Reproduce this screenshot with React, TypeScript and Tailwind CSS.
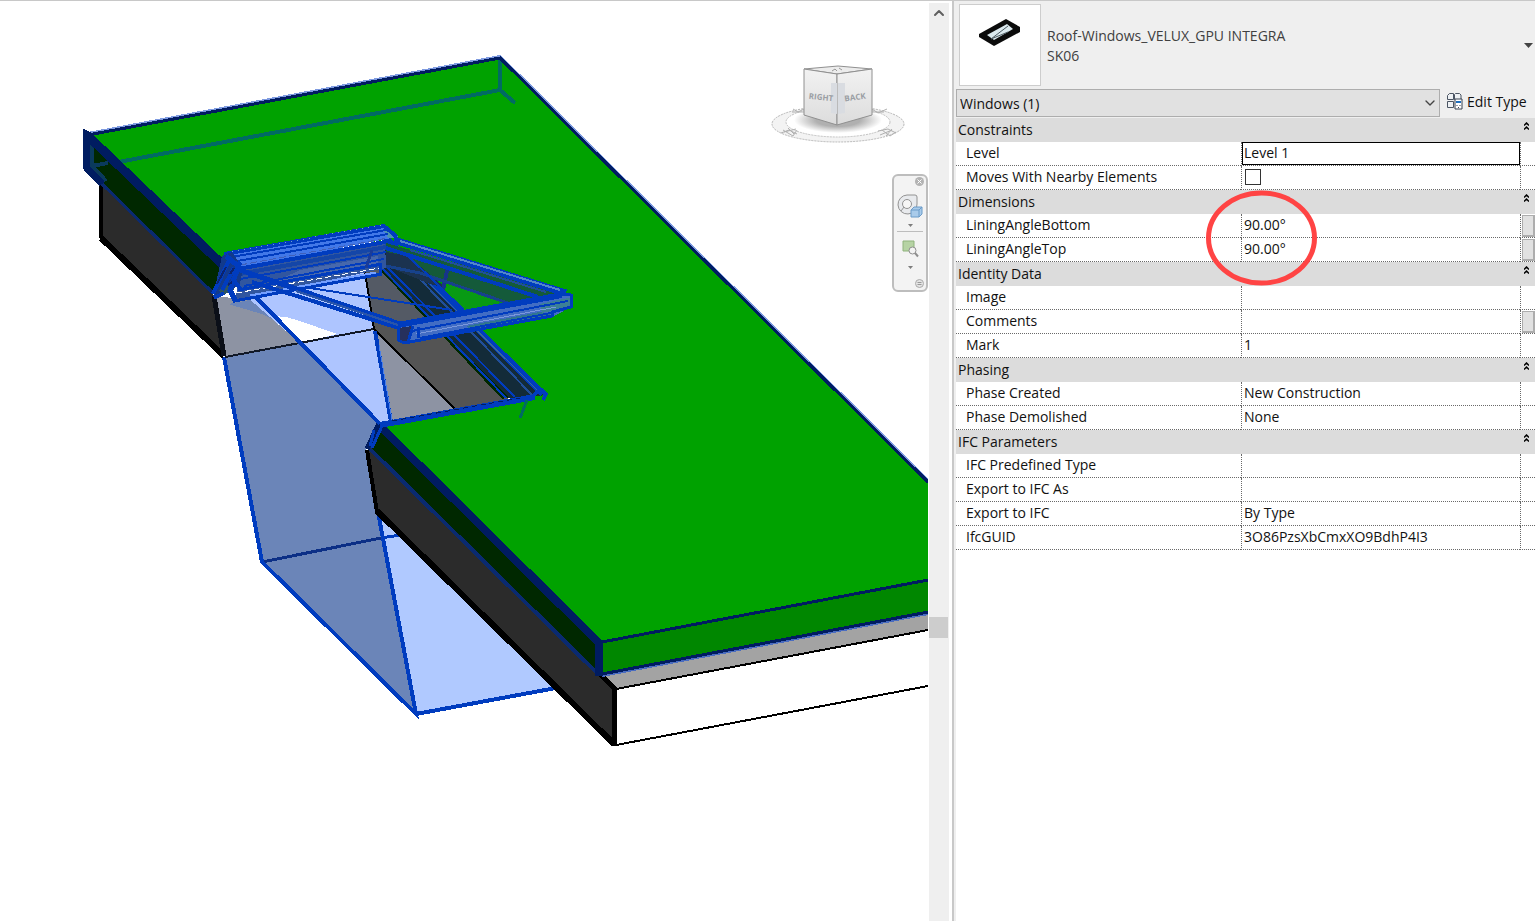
import { useState } from 'react';
import { ChevronDown, ChevronUp } from 'lucide-react';

interface Parameter {
  name: string;
  value?: string;
  kind?: 'input' | 'checkbox';
  marked?: boolean;
  hasPicker?: boolean;
}

interface ParameterGroup {
  title: string;
  parameters: Parameter[];
}

const GROUPS: ParameterGroup[] = [
  {
    title: 'Constraints',
    parameters: [
      { name: 'Level', value: 'Level 1', kind: 'input' },
      { name: 'Moves With Nearby Elements', kind: 'checkbox' },
    ],
  },
  {
    title: 'Dimensions',
    parameters: [
      { name: 'LiningAngleBottom', value: '90.00°', marked: true, hasPicker: true },
      { name: 'LiningAngleTop', value: '90.00°', hasPicker: true },
    ],
  },
  {
    title: 'Identity Data',
    parameters: [{ name: 'Image' }, { name: 'Comments', hasPicker: true }, { name: 'Mark', value: '1' }],
  },
  {
    title: 'Phasing',
    parameters: [
      { name: 'Phase Created', value: 'New Construction' },
      { name: 'Phase Demolished', value: 'None' },
    ],
  },
  {
    title: 'IFC Parameters',
    parameters: [
      { name: 'IFC Predefined Type' },
      { name: 'Export to IFC As' },
      { name: 'Export to IFC', value: 'By Type' },
      { name: 'IfcGUID', value: '3O86PzsXbCmxXO9BdhP4I3' },
    ],
  },
];

const BLUE = '#003cbf';
const NAVY = '#001c61';

// The roof slab, the opening with its lining, and the selected roof window.
function RoofModel() {
  return (
    <svg
      viewBox="0 1 928 920"
      className="block w-full h-auto"
      shapeRendering="crispEdges"
      fill="none"
      role="img"
      aria-label="3D view of the roof window"
    >
      {/* Lining below the roof */}
      <polygon points="224,357 298,343 380,424 366,450 378,512 416,714 262,561" fill="#6b85b8" />
      <polygon points="378,512 555,688 416,714" fill="#b0c9ff" />
      <path d="M262 562L381 538" stroke="#0c2f86" strokeWidth="3" />
      <path d="M381 538L400 535" stroke={BLUE} strokeWidth="3" />
      <path d="M224 357L262 562L416 714L378 512M416 714L556 688" stroke={BLUE} strokeWidth="4" />

      {/* Roof surface */}
      <polygon points="90,134 500,57 928,481 928,580 602,642 380,427 532,398 384,240 225,266" fill="#00a200" />
      <polygon points="602,642 928,580 928,612 602,674" fill="#008700" />
      <polygon points="602,674 928,612 928,630 616,688" fill="#a3a3a3" />
      <polygon points="616,688 928,630 928,685 616,744" fill="#ffffff" />
      <path d="M616 689L928 630M616 745L928 686" stroke="#000" strokeWidth="2" />
      <path d="M515 103L500 90V59M500 90L92 167" stroke="#006b62" strokeWidth="4" />
      <path d="M88 134L500 57L928 481" stroke="#7f9be0" strokeWidth="4" />
      <path d="M88 135L500 58L928 482" stroke={NAVY} strokeWidth="3" />

      {/* Left edge, upper part */}
      <polygon points="101,184 213,292 224,356 101,238" fill="#2b2b2b" />
      <path d="M101 184V238" stroke="#000" strokeWidth="4" />
      <path d="M101 238L224 356" stroke="#000" strokeWidth="6" />
      <polygon points="90,140 226,268 214,292 92,172" fill="#002800" />
      <path d="M92 143V166L106 181M92 166L108 163" stroke="#0a3a5c" strokeWidth="4" />
      <path d="M99 181L213 293" stroke="#0a2a70" strokeWidth="3" />
      <path d="M102 184L86 167V134L92 137" stroke={NAVY} strokeWidth="7" />
      <path d="M88 136L224 266" stroke={NAVY} strokeWidth="9" />

      {/* Left edge, lower part */}
      <polygon points="367,446 384,448 616,688 616,745 378,512" fill="#2b2b2b" />
      <path d="M367 450L377 512" stroke="#000" strokeWidth="4" />
      <path d="M377 511L614 744" stroke="#000" strokeWidth="6" />
      <path d="M598 672L614 688V746" stroke="#000" strokeWidth="5" />
      <polygon points="382,428 602,645 602,676 369,447" fill="#002800" />
      <path d="M369 448L598 674" stroke="#0a2a70" strokeWidth="4" />
      <path d="M602 642L928 580" stroke={NAVY} strokeWidth="3" />
      <path d="M602 675L928 613" stroke="#4a6cc0" strokeWidth="4" />
      <path d="M602 674L928 612" stroke={NAVY} strokeWidth="3" />
      <path d="M381 427L599 643V676" stroke={NAVY} strokeWidth="8" />
      <path d="M379 423L367 449" stroke={NAVY} strokeWidth="5" />
      <path d="M381 428L372 448M374 430L370 446" stroke={BLUE} strokeWidth="3" />

      {/* Inside of the opening */}
      <polygon points="214,296 250,300 300,343 225,356" fill="#8d93a3" />
      <polygon points="228,304 250,300 278,322 262,314" fill="#6b85b8" />
      <polygon points="248,298 364,272 374,328 300,343" fill="#aec5ff" />
      <polygon points="274,316 286,317 300,321 337,334 300,343" fill="#ffffff" />
      <polygon points="300,343 374,328 391,422 380,424" fill="#aec5ff" />
      <polygon points="374,329 455,409 391,422" fill="#8d93a3" />
      <polygon points="364,272 384,268 508,399 455,409 374,329" fill="#545454" />
      <polygon points="364,272 380,268 440,318 398,326 372,316" fill="#545a65" />
      <polygon points="380,270 386,268 512,397 502,399" fill="#002800" />
      <polygon points="384,238 400,250 546,395 510,399 384,272" fill="#132b39" />
      <path d="M225 357L374 329" stroke="#111827" strokeWidth="2" />
      <path d="M365 272L374 329L455 409" stroke="#000" strokeWidth="2" />
      <path d="M214 296L224 356" stroke="#0b0f18" strokeWidth="5" />
      <path d="M243 284L380 424" stroke={BLUE} strokeWidth="4" />
      <path d="M375 331L391 422" stroke={BLUE} strokeWidth="4" />
      <path d="M379 345L392 420" stroke="#4a7fe8" strokeWidth="1" />

      {/* Frame */}
      <path d="M380 425L535 397" stroke={BLUE} strokeWidth="6" />
      <path d="M392 421L520 398" stroke={NAVY} strokeWidth="1" strokeDasharray="5 4" />
      <path d="M527 400L520 418" stroke="#006b62" strokeWidth="3" />
      <path d="M382 268L506 398M386 266L515 397" stroke={BLUE} strokeWidth="2" />
      <path d="M384 242L534 397" stroke="#204f9a" strokeWidth="2" />
      <path d="M386 238L543 394" stroke={BLUE} strokeWidth="6" />
      <path d="M430 284L538 391" stroke="#3f6a94" strokeWidth="1" />
      <path d="M532 397L540 389L546 394L543 400" stroke={BLUE} strokeWidth="4" />

      {/* Head of the window */}
      <polygon points="238,268 385,241 386,268 236,300" fill="#31569f" />
      <polygon points="300,270 378,256 378,266 262,288" fill="#4768ac" />
      <polygon points="225,255 384,225 397,237 238,268" fill="#4278e8" />
      <polygon points="384,231 390,228 398,237 388,238" fill="#4a94b0" />
      <path d="M224 254L384 226L397 237" stroke={BLUE} strokeWidth="4" />
      <path d="M232 252L382 225" stroke="#6fa3c8" strokeWidth="1" strokeDasharray="1 5" />
      <path d="M226 258L386 230M232 262L388 234" stroke={BLUE} strokeWidth="2" />
      <path d="M240 265L388 238" stroke="#4060b8" strokeWidth="1" strokeDasharray="7 3" />
      <path d="M238 269L390 241" stroke={BLUE} strokeWidth="4" />
      <path d="M240 274L386 247" stroke="#1446a8" strokeWidth="4" />
      <path d="M240 279L386 252M244 286L384 259" stroke={BLUE} strokeWidth="2" />
      <path d="M236 293L380 268" stroke="#ffffff" strokeWidth="1" strokeDasharray="6 3" />
      <path d="M250 296L376 273" stroke="#75a0ff" strokeWidth="3" />
      <path d="M238 290L382 264M234 301L382 274" stroke={BLUE} strokeWidth="3" />
      <path d="M372 250L366 268" stroke="#1a3c98" strokeWidth="3" />
      <path d="M380 264V274" stroke={BLUE} strokeWidth="3" />

      {/* Hinge and flashing on the left end */}
      <polygon points="213,297 222,256 232,252 243,268 240,284 232,290" fill="#123a8c" />
      <polygon points="219,290 230,284 234,290 222,295" fill="#2f5560" />
      <path d="M213 294L230 258M222 290L234 268" stroke={BLUE} strokeWidth="4" />
      <path d="M226 256L243 270M240 262L230 290L236 302" stroke={BLUE} strokeWidth="5" />
      <path d="M234 280L241 290M214 298L224 293" stroke={BLUE} strokeWidth="4" />
      <path d="M217 284L226 267M230 274L234 268M228 285L232 282" stroke="#0a2470" strokeWidth="2" />

      {/* Open sash */}
      <polygon points="386,243 566,294 548,300 506,303 386,262" fill="#145a3a" />
      <polygon points="386,252 408,256 446,288 430,284 386,266" fill="#1b3350" />
      <polygon points="443,286 452,285 508,302 464,310" fill="#089a14" />
      <path d="M448 266L443 290" stroke="#16348a" strokeWidth="4" />
      <path d="M386 266L420 273L508 303" stroke="#17428c" strokeWidth="3" />
      <path d="M386 248L538 297" stroke={BLUE} strokeWidth="4" />
      <path d="M410 250L546 292" stroke="#204f9a" strokeWidth="2" />
      <path d="M394 240L566 293" stroke={BLUE} strokeWidth="7" />
      <path d="M400 241L560 290" stroke="#5287c8" strokeWidth="2" />
      <path d="M310 288L452 310M408 256L464 310" stroke={BLUE} strokeWidth="2" />
      <path d="M240 270L400 324" stroke={BLUE} strokeWidth="5" />
      <path d="M252 282L402 329" stroke={BLUE} strokeWidth="4" />
      <path d="M296 291L398 325" stroke="#2a55a8" strokeWidth="2" />
      <polygon points="398,324 562,294 573,297 573,306 554,316 404,344 398,340" fill="#426dc4" />
      <polygon points="540,304 573,297 573,306 542,313" fill="#3c8096" />
      <polygon points="466,326 540,312 552,315 472,330" fill="#2f7590" />
      <polygon points="398,328 412,326 410,342 400,342" fill="#26305c" />
      <path d="M398 325L562 295" stroke={BLUE} strokeWidth="6" />
      <path d="M412 331L568 301M420 338L556 312" stroke={BLUE} strokeWidth="2" />
      <path d="M416 334L556 307" stroke="#7a98dc" strokeWidth="1" />
      <path d="M554 293L571 295V307L552 312V316L404 343L398 340V326" stroke={BLUE} strokeWidth="3" />
      <path d="M413 326L408 342M418 327V338" stroke={BLUE} strokeWidth="3" />
    </svg>
  );
}

function ViewCube() {
  return (
    <svg viewBox="770 62 136 82" className="w-[136px] h-[82px]" fill="none" role="img" aria-label="View cube">
      <defs>
        <radialGradient id="cubeShadow">
          <stop offset="0.5" stopColor="#b0b0b0" />
          <stop offset="1" stopColor="#ffffff" />
        </radialGradient>
        <linearGradient id="cubeFace" x1="0" y1="0" x2="0" y2="1">
          <stop offset="0" stopColor="#f2f2f2" />
          <stop offset="1" stopColor="#dcdcdc" />
        </linearGradient>
      </defs>
      <ellipse cx="838" cy="124" rx="66" ry="18" fill="#f3f3f3" stroke="#b5b5b5" strokeDasharray="2 1" />
      <ellipse cx="838" cy="122" rx="52" ry="15" fill="#fff" stroke="#c0c0c0" strokeDasharray="2 1" />
      <ellipse cx="838" cy="120" rx="44" ry="13" fill="url(#cubeShadow)" />
      <path
        d="M793 109l5 3 6-3M792 112h12M872 109l6 4 9-4M872 112h12M781 133l8-3 8 4M784 132l12-3M783 130l10 6 4-6M788 128l6 6M878 131l10-2 8 4M880 135l12-5M882 130l8 6 6-4M886 136l6-7"
        stroke="#b0b0b0"
      />
      <polygon points="804,69 838,66 872,69 837,74" fill="#ececec" stroke="#909090" />
      <polygon points="804,69 837,74 837,125 804,115" fill="url(#cubeFace)" stroke="#909090" />
      <polygon points="837,74 872,69 872,115 837,125" fill="url(#cubeFace)" stroke="#909090" />
      <polygon points="831,83 837,83 837,114 831,113" fill="#d9dce1" />
      <polygon points="838,83 845,83 845,113 838,114" fill="#d9dce1" />
      <path d="M832 71l3-2 2 2M839 68l3 2" stroke="#999" />
      <g
        fill="#9a9ea3"
        fontFamily='"Liberation Sans Narrow", "Open Sans", sans-serif'
        fontSize="8"
        fontWeight="700"
        textAnchor="middle"
      >
        <text x="821" y="100" transform="rotate(6 821 97)">RIGHT</text>
        <text x="855" y="100" transform="rotate(-8 855 97)">BACK</text>
      </g>
    </svg>
  );
}

function NavigationBar() {
  return (
    <div className="w-9 h-[118px] flex flex-col items-center rounded-md border-2 border-[#bdbdbd] bg-[#f3f3f3] pt-px">
      <button aria-label="Close navigation bar" className="self-end mr-0.5">
        <svg viewBox="0 0 9 9" className="w-[9px] h-[9px]">
          <circle cx="4.5" cy="4.5" r="4.5" fill="#b3b3b3" />
          <path d="M2.5 2.5l4 4M6.5 2.5l-4 4" stroke="#fff" />
        </svg>
      </button>
      <button aria-label="Steering wheel" className="mt-2">
        <svg viewBox="0 0 26 26" className="w-[26px] h-[26px]" fill="none">
          <path d="M10 1h8q2 0 2 2v7a9.500 9.500 0 1 1-10-9z" fill="#e8eaed" stroke="#929292" />
          <circle cx="10" cy="10" r="4.500" fill="#f6f6f6" stroke="#929292" />
          <path d="M7 13l-3 4" stroke="#929292" />
          <path d="M14 16l3-3h8v7l-3 3h-8z" fill="#a9cbea" stroke="#6b9bc8" />
          <path d="M14 16h8v7M22 16l3-3" stroke="#6b9bc8" />
        </svg>
      </button>
      <button aria-label="Steering wheel options" className="mt-1">
        <svg viewBox="0 0 5 3" className="w-[5px] h-[3px]">
          <path d="M0 0h5L2.500 3z" fill="#7d7d7d" />
        </svg>
      </button>
      <div className="w-[26px] h-px mt-1 bg-[#bdbdbd]" />
      <button aria-label="Zoom region" className="mt-2">
        <svg viewBox="0 0 18 18" className="w-[18px] h-[18px]" fill="none">
          <path d="M2 1h11v10H2z" fill="#b6d3a4" stroke="#8fb37c" />
          <circle cx="11.500" cy="10.500" r="3.500" fill="#f3f3f3" stroke="#8f8f8f" />
          <path d="M14 13l3 3.500" stroke="#8f8f8f" strokeWidth="2" />
        </svg>
      </button>
      <button aria-label="Zoom options" className="mt-2">
        <svg viewBox="0 0 5 3" className="w-[5px] h-[3px]">
          <path d="M0 0h5L2.500 3z" fill="#7d7d7d" />
        </svg>
      </button>
      <button aria-label="Customize" className="self-end mr-0.5 mt-auto mb-0.5">
        <svg viewBox="0 0 9 9" className="w-[9px] h-[9px]">
          <circle cx="4.5" cy="4.5" r="4" fill="#e4e4e4" stroke="#aaa" />
          <path d="M2.500 3.500h4M2.500 5.500h4" stroke="#999" />
        </svg>
      </button>
    </div>
  );
}

function ScrollBar() {
  return (
    <div className="w-5 mr-[3px] mt-0.5 shrink-0 flex flex-col bg-[#efefef]">
      <button aria-label="Scroll up" className="h-5 flex items-center justify-center text-[#606060]">
        <ChevronUp className="w-4 h-4" strokeWidth={3} />
      </button>
      <div className="flex-[594]" />
      <div className="h-[21px] w-[19px] bg-[#cdcdcd]" />
      <div className="flex-[283]" />
    </div>
  );
}

function TypeSelector() {
  return (
    <button className="w-full h-[88px] flex items-center text-left pl-[3px]">
      <span className="w-[82px] h-[82px] shrink-0 border border-[#cdcdcd] bg-white">
        <svg viewBox="0 0 80 80" className="block w-20 h-20">
          <path d="M19 29L46 14l14 8v5L34 41l-15-9z" fill="#0b0b0b" />
          <path d="M27 30l20-11 6 5-19 11z" fill="#dbe9ee" />
          <path d="M31 34l17-13M31 34l17-7" stroke="#4b5960" fill="none" />
        </svg>
      </span>
      <span className="flex-1 pl-1.5 pt-0.5 text-[14px] leading-5 text-[#404040]">
        Roof-Windows_VELUX_GPU INTEGRA
        <br />
        SK06
      </span>
      <svg viewBox="0 0 9 5" className="w-[9px] h-[5px] mr-0.5">
        <path d="M0 0h9L4.500 5z" fill="#444" />
      </svg>
    </button>
  );
}

function EditTypeIcon() {
  return (
    <svg viewBox="0 0 17 17" className="w-[17px] h-[17px] shrink-0" fill="none">
      <path d="M1.500 2.500l2-2h4v6h-6zM9.500 .5h4l1.500 1.500v4.500H8.500v-5zM1.500 8.500h6v6h-6z" fill="#eef1f4" stroke="#4b5563" />
      <path d="M9 6h7v10H9z" fill="#fff" stroke="#374151" />
      <path d="M10 8h5v2h-5z" fill="#1d6fc0" />
      <path d="M10.500 12.500h1M13.500 12.500h1M12 14.500h1" stroke="#374151" />
    </svg>
  );
}

function ParameterRow({ parameter }: { parameter: Parameter }) {
  const { name, value, kind, marked, hasPicker } = parameter;
  const id = name.replace(/ /g, '-');

  return (
    <tr className="h-6 align-top">
      <th scope="row" className="h-6 p-0 pl-2.5 text-left font-normal border-b border-dotted border-[#696969]">
        <label htmlFor={kind ? id : undefined} className="block leading-[22px]">
          {name}
        </label>
      </th>
      <td
        className={`h-6 p-0 leading-[22px] border-b border-l border-dotted border-[#696969] ${
          marked ? 'relative' : ''
        }`}
      >
        {kind === 'input' && (
          <input
            id={id}
            defaultValue={value}
            className="block w-full h-[23px] pl-px pb-0.5 border border-black outline-none bg-white"
          />
        )}
        {kind === 'checkbox' && (
          <input
            id={id}
            type="checkbox"
            className="block ml-[3px] mt-[3px] w-4 h-4 appearance-none border border-[#333] bg-white checked:bg-[#333]"
          />
        )}
        {!kind && <span className="block pl-0.5">{value}</span>}
        {marked && (
          <svg
            viewBox="0 0 112 96"
            className="absolute -left-9 -top-6 z-10 w-28 h-24 max-w-none pointer-events-none"
            fill="none"
          >
            <ellipse cx="55.500" cy="48" rx="53" ry="45" stroke="#ff4444" strokeWidth="5" />
          </svg>
        )}
      </td>
      <td className="h-6 p-0 border-b border-l border-dotted border-[#696969]">
        {hasPicker && (
          <button
            aria-label={`Associate ${name}`}
            className="block w-[13px] h-[22px] ml-px mt-px border border-r-2 border-b-2 border-[#adadad] bg-[#e1e1e1]"
          />
        )}
      </td>
    </tr>
  );
}

function ParameterTable() {
  const [collapsed, setCollapsed] = useState<string[]>([]);

  const toggle = (title: string) => {
    setCollapsed(prev => (prev.includes(title) ? prev.filter(t => t !== title) : [...prev, title]));
  };

  return (
    <table className="w-full table-fixed border-separate border-spacing-0">
      <colgroup>
        <col className="w-[285px]" />
        <col />
        <col className="w-[15px]" />
      </colgroup>
      {GROUPS.map(group => (
        <tbody key={group.title}>
          <tr className="h-6 bg-[#dcdcdc]">
            <th colSpan={3} scope="colgroup" className="h-6 p-0 font-normal">
              <button
                onClick={() => toggle(group.title)}
                className="w-full h-6 flex items-center justify-between pl-0.5 pr-1.5 text-left"
              >
                <span className="leading-6">{group.title}</span>
                <svg viewBox="0 0 5 8" className="w-[5px] h-2 mb-2" fill="none">
                  <path d="M0 3.500L2.500 1L5 3.500M0 7.500L2.500 5L5 7.500" stroke="#000" strokeWidth="1.500" />
                </svg>
              </button>
            </th>
          </tr>
          {!collapsed.includes(group.title) &&
            group.parameters.map(p => <ParameterRow key={p.name} parameter={p} />)}
        </tbody>
      ))}
    </table>
  );
}

function PropertiesPalette() {
  return (
    <aside className="w-[583px] shrink-0 flex flex-col border-l-2 border-[#c8c8c8] bg-[#efefef] pl-0.5">
      <TypeSelector />
      <div className="h-[29px] flex items-start">
        <div className="relative flex-1">
          <select
            aria-label="Element filter"
            className="block w-full h-7 appearance-none pl-[3px] border border-[#adadad] bg-[#e1e1e1]"
          >
            <option>Windows (1)</option>
          </select>
          <ChevronDown
            className="absolute right-0.5 top-1.5 w-4 h-4 text-[#444] pointer-events-none"
            strokeWidth={2}
          />
        </div>
        <button className="w-[95px] h-6 flex items-center gap-1 pl-1.5 whitespace-nowrap">
          <EditTypeIcon />
          Edit Type
        </button>
      </div>
      <div className="flex-1 bg-white">
        <ParameterTable />
      </div>
    </aside>
  );
}

export default function App() {
  return (
    <main className='min-h-screen flex overflow-hidden border-t border-[#c8c8c8] bg-white text-[14px] text-[#111] font-["Open_Sans","Noto_Sans",sans-serif]'>
      <section className="relative flex-1 min-w-0 pr-px">
        <RoofModel />
        <div className="absolute right-[23px] top-[61px]">
          <ViewCube />
        </div>
        <div className="absolute right-px top-[173px]">
          <NavigationBar />
        </div>
      </section>
      <ScrollBar />
      <PropertiesPalette />
    </main>
  );
}
